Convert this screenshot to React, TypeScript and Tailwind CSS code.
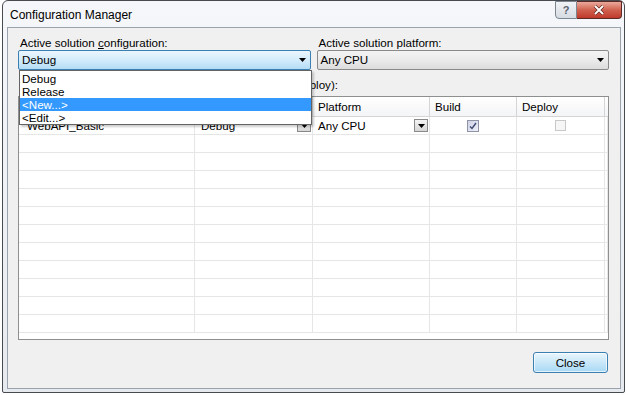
import React from 'react';

const Arrow = () => (
  <svg width="7" height="4" viewBox="0 0 7 4">
    <path d="M0 0h7L3.5 4z" fill="#000" />
  </svg>
);

const CellButton = () => (
  <div className="w-[14px] h-[13px] border border-[#8a8a8a] bg-gradient-to-b from-[#f4f4f4] to-[#d6d6d6] flex items-center justify-center">
    <Arrow />
  </div>
);

const gridCols = 'grid grid-cols-[176px_118px_117px_87px_88px_1fr]';
const cell = 'border-r border-b border-[#e6e6e6] h-[18px]';

const App = () => {
  const emptyRows = Array.from({ length: 11 });
  return (
    <div className="relative w-[628px] h-[395px] bg-white font-['Liberation_Sans',Arial,sans-serif] text-[11.6px] text-black">
      {/* window frame */}
      <div className="ml-[2px] w-[623px] h-[393px] border border-[#474b50] rounded-t-[6px] rounded-b-[2px] bg-gradient-to-b from-[#f5f7fa] via-[#eef1f5] to-[#e6eaef] flex flex-col">
        <div className="h-[26px] flex justify-between">
          <span className="pl-[7px] pt-[7px] text-[12px] leading-[14px]">Configuration Manager</span>
          <div className="flex mr-[2px] h-[18px]">
            <div className="w-[22px] border border-[#7b8592] rounded-bl-[4px] bg-gradient-to-b from-[#f1f3f6] to-[#d5dbe2] flex items-center justify-center text-[11px] font-bold text-[#5a6270]">
              ?
            </div>
            <div className="w-[45px] border border-l-0 border-[#5b2a26] rounded-br-[4px] bg-gradient-to-b from-[#e9a99c] via-[#d0614f] to-[#c0392b] flex items-center justify-center">
              <svg width="12" height="10" viewBox="0 0 12 10">
                <path d="M2 1l8 8M10 1L2 9" stroke="#5a1c16" strokeWidth="3.2" />
                <path d="M2 1l8 8M10 1L2 9" stroke="#fff" strokeWidth="2" />
              </svg>
            </div>
          </div>
        </div>

        {/* client area */}
        <div className="ml-[4px] w-[614px] h-[362px] border border-[#9aa3ad] bg-[#f0f0f0] pl-[10px] pr-[11px] pt-[8px] flex flex-col">
          <div className="grid grid-cols-2 gap-x-[6px]">
            <div>
              <div className="ml-[2px] h-[14px] leading-[14px]">
                Active solution <span className="underline">c</span>onfiguration:
              </div>
              <div className="h-[20px] border border-[#3c7fb1] rounded-[2px] bg-gradient-to-b from-[#eaf6fd] via-[#d3ecfb] to-[#b4dcf5] flex items-center justify-between pl-[3px] pr-[4px]">
                <span>Debug</span>
                <Arrow />
              </div>
            </div>
            <div>
              <div className="ml-[2px] h-[14px] leading-[14px]">Active solution platform:</div>
              <div className="h-[20px] border border-[#8a8a8a] rounded-[2px] bg-gradient-to-b from-[#f3f3f3] via-[#ebebeb] to-[#dcdcdc] flex items-center justify-between pl-[3px] pr-[4px]">
                <span>Any CPU</span>
                <Arrow />
              </div>
            </div>
          </div>

          <div className="mt-[8px] ml-[2px] w-[318px] h-[14px] leading-[14px] overflow-hidden whitespace-nowrap flex justify-end">
            <span>Project contexts (check the project configurations to build or deploy):</span>
          </div>

          {/* project grid */}
          <div className="mt-[4px] h-[244px] border border-[#8e8f8f] bg-white overflow-hidden">
            <div className={`${gridCols} h-[20px] bg-gradient-to-b from-white to-[#f3f4f6]`}>
              {['Project', 'Configuration', 'Platform', 'Build', 'Deploy', ''].map((h, i) => (
                <div key={i} className="border-r border-b border-[#d5d5d5] h-[20px] leading-[20px] pl-[5px]">
                  {h}
                </div>
              ))}
            </div>
            <div className={gridCols}>
              <div className={`${cell} pl-[8px] leading-[18px]`}>WebAPI_Basic</div>
              <div className={`${cell} pl-[6px] pr-[1px] flex items-center justify-between`}>
                <span>Debug</span>
                <CellButton />
              </div>
              <div className={`${cell} pl-[5px] pr-[1px] flex items-center justify-between`}>
                <span>Any CPU</span>
                <CellButton />
              </div>
              <div className={`${cell} flex items-center justify-center`}>
                <div className="w-[12px] h-[12px] border border-[#8f93a6] bg-gradient-to-br from-[#cfd3e6] to-[#eef0f8] flex items-center justify-center">
                  <svg width="8" height="8" viewBox="0 0 8 8">
                    <path d="M1 4.5l2 2L7 1" stroke="#3e4a73" strokeWidth="1.4" fill="none" />
                  </svg>
                </div>
              </div>
              <div className={`${cell} flex items-center justify-center`}>
                <div className="w-[11px] h-[11px] border border-[#c8c8c8] bg-[#f6f6f6]" />
              </div>
              <div className={cell} />
            </div>
            {emptyRows.map((_, r) => (
              <div key={r} className={gridCols}>
                {[0, 1, 2, 3, 4, 5].map((c) => (
                  <div key={c} className={cell} />
                ))}
              </div>
            ))}
          </div>

          <div className="mt-[12px] flex justify-end">
            <button className="mr-[1px] w-[75px] h-[21px] border border-[#3c7fb1] rounded-[3px] bg-gradient-to-b from-[#eaf6fd] via-[#c9e7f8] to-[#a7d9f5] shadow-[inset_0_0_0_1px_#ffffffaa]">
              Close
            </button>
          </div>
        </div>
      </div>

      {/* open dropdown list */}
      <div className="absolute left-[19px] top-[70px] w-[293px] h-[55px] border border-[#646464] bg-white shadow-[2px_2px_2px_rgba(0,0,0,0.2)] py-[1px]">
        {['Debug', 'Release', '<New...>', '<Edit...>'].map((item) => (
          <div
            key={item}
            className={`h-[13px] leading-[13px] pl-[2px] ${item === '<New...>' ? 'bg-[#3399ff] text-white' : ''}`}
          >
            {item}
          </div>
        ))}
      </div>
    </div>
  );
};

export default App;
